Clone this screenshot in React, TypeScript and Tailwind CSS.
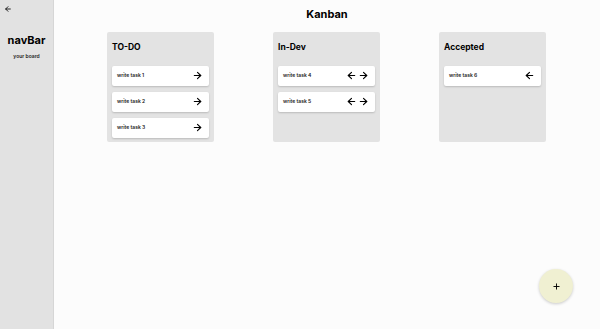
import React from "react";
import { ArrowLeft, ArrowRight, Plus } from "lucide-react";

type Task = { id: number; title: string };

const columns: { name: string; tasks: Task[]; back: boolean; next: boolean }[] = [
  { name: "TO-DO", tasks: [{ id: 1, title: "write task 1" }, { id: 2, title: "write task 2" }, { id: 3, title: "write task 3" }], back: false, next: true },
  { name: "In-Dev", tasks: [{ id: 4, title: "write task 4" }, { id: 5, title: "write task 5" }], back: true, next: true },
  { name: "Accepted", tasks: [{ id: 6, title: "write task 6" }], back: true, next: false },
];

const Card: React.FC<{ task: Task; back: boolean; next: boolean }> = ({ task, back, next }) => (
  <div className="h-[20px] bg-white rounded-[2px] shadow-[0_1px_2px_rgba(0,0,0,0.18)] flex items-center justify-between pl-[5px] pr-[6px]">
    <span className="text-[5px] font-semibold text-[#222]">{task.title}</span>
    <div className="flex items-center gap-[1px] text-black">
      {back && <ArrowLeft className="w-[11px] h-[11px]" strokeWidth={2.4} />}
      {next && <ArrowRight className="w-[11px] h-[11px]" strokeWidth={2.4} />}
    </div>
  </div>
);

export default function App() {
  return (
    <div className="w-[600px] h-[329px] flex bg-[#fcfcfc] font-['Inter',sans-serif] overflow-hidden">
      <aside className="w-[54px] shrink-0 bg-[#e2e2e2] border-r border-[#d6d6d6] flex flex-col items-center">
        <div className="self-start pl-[4px] pt-[5px]">
          <ArrowLeft className="w-[8px] h-[8px] text-black" strokeWidth={2.5} />
        </div>
        <h2 className="mt-[22px] text-[11px] font-bold text-black leading-none">navBar</h2>
        <p className="mt-[7px] text-[5px] font-semibold text-[#222]">your board</p>
      </aside>
      <main className="flex-1 relative">
        <h1 className="text-center text-[11px] font-bold text-black pt-[9px] leading-none">Kanban</h1>
        <div className="flex gap-[59px] pl-[53px] mt-[12px]">
          {columns.map((col) => (
            <section key={col.name} className="w-[107px] h-[110px] bg-[#e3e3e3] rounded-[2px] px-[5px] pt-[11px]">
              <h3 className="text-[8.5px] font-bold text-black leading-none">{col.name}</h3>
              <div className="mt-[14px] flex flex-col gap-[6px]">
                {col.tasks.map((t) => (
                  <Card key={t.id} task={t} back={col.back} next={col.next} />
                ))}
              </div>
            </section>
          ))}
        </div>
        <button className="absolute left-[485px] top-[269px] w-[34px] h-[34px] rounded-full bg-[#f0f0d2] shadow-[0_1px_3px_rgba(0,0,0,0.2)] flex items-center justify-center">
          <Plus className="w-[9px] h-[9px] text-black" strokeWidth={2.5} />
        </button>
      </main>
    </div>
  );
}
